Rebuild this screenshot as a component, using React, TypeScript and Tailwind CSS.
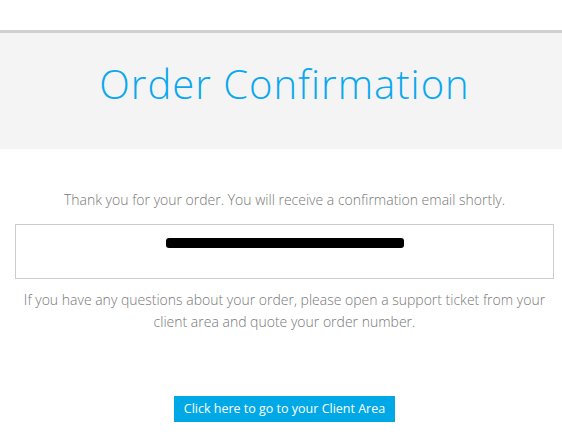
export default function App() {
  return (
    <div
      className="w-[562px] h-[443px] bg-white overflow-hidden"
      style={{ fontFamily: '"Open Sans", "Liberation Sans", sans-serif' }}
    >
      <div className="h-[30px]" />
      <div className="border-t-[3px] border-[#d0d0d0] bg-[#f4f4f4] h-[119px] flex items-center justify-center pl-[7px]">
        <h1 className="text-[40px] font-light tracking-[1px] text-[#0aa8ee] leading-none pb-[15px]">
          Order Confirmation
        </h1>
      </div>

      <div className="pl-[15px] pr-[8px] pt-[41px] text-center text-[#777] text-[14px] font-light">
        <p className="leading-[20px]">
          Thank you for your order. You will receive a confirmation email shortly.
        </p>
        <div className="mt-[14px] h-[55px] border border-[#ccc] flex justify-center pt-[13px]">
          <div className="w-[238px] h-[10px] bg-black rounded-[3px]" />
        </div>
        <p className="mt-[10px] leading-[22px] px-[6px]">
          If you have any questions about your order, please open a support ticket from your
          client area and quote your order number.
        </p>
        <div className="mt-[63px] flex justify-center">
          <button className="h-[26px] px-[10px] bg-[#00a9e6] text-white text-[12.5px] font-normal">
            Click here to go to your Client Area
          </button>
        </div>
      </div>
    </div>
  );
}
